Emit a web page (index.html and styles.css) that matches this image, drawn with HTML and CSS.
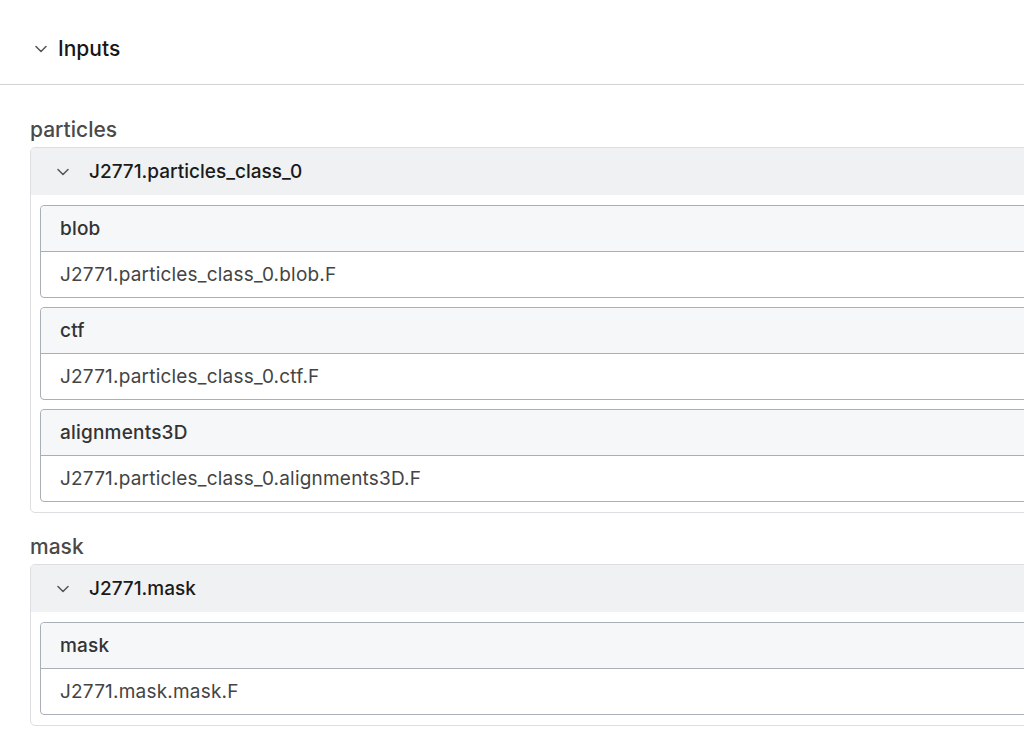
FILE: index.html
```html
<!DOCTYPE html>
<html lang="en">
<head>
    <meta charset="UTF-8">
    <meta name="viewport" content="width=device-width, initial-scale=1.0">
    <title>Inputs</title>
    <link rel="stylesheet" href="styles.css">
</head>
<body>
    <div class="section-header">
        <svg class="chevron" width="12" height="8" viewBox="0 0 12 8"><polyline points="1,1.5 6,6.5 11,1.5"/></svg>
        <span>Inputs</span>
    </div>
    <div class="content">
        <div class="input-group">
            <div class="group-label">particles</div>
            <div class="result-box">
                <div class="result-header">
                    <svg class="chevron" width="12" height="8" viewBox="0 0 12 8"><polyline points="1,1.5 6,6.5 11,1.5"/></svg>
                    <span>J2771.particles_class_0</span>
                </div>
                <div class="result-body">
                    <div class="slot">
                        <div class="slot-name">blob</div>
                        <div class="slot-value">J2771.particles_class_0.blob.F</div>
                    </div>
                    <div class="slot">
                        <div class="slot-name">ctf</div>
                        <div class="slot-value">J2771.particles_class_0.ctf.F</div>
                    </div>
                    <div class="slot">
                        <div class="slot-name">alignments3D</div>
                        <div class="slot-value">J2771.particles_class_0.alignments3D.F</div>
                    </div>
                </div>
            </div>
        </div>
        <div class="input-group">
            <div class="group-label">mask</div>
            <div class="result-box">
                <div class="result-header">
                    <svg class="chevron" width="12" height="8" viewBox="0 0 12 8"><polyline points="1,1.5 6,6.5 11,1.5"/></svg>
                    <span>J2771.mask</span>
                </div>
                <div class="result-body">
                    <div class="slot">
                        <div class="slot-name">mask</div>
                        <div class="slot-value">J2771.mask.mask.F</div>
                    </div>
                </div>
            </div>
        </div>
    </div>
</body>
</html>
```

FILE: styles.css
```css
body {
    font-family: Inter, "Noto Sans", sans-serif;
    margin: 0;
    overflow: hidden;
    background: #fff;
    color: #333;
}
.chevron {
    flex: none;
}
.chevron polyline {
    fill: none;
    stroke: #555;
    stroke-width: 1.5;
    stroke-linecap: round;
    stroke-linejoin: round;
}
.section-header {
    display: flex;
    align-items: center;
    gap: 11px;
    padding: 37px 0 23px 35px;
    line-height: 24px;
    font-size: 21px;
    font-weight: 500;
    color: #161616;
    border-bottom: 1px solid #d4d4d4;
}
.content {
    padding: 33px 0 0 30px;
    width: 1100px;
}
.input-group {
    margin-bottom: 22px;
}
.group-label {
    font-size: 21px;
    line-height: 24px;
    font-weight: 500;
    color: #4a4a4a;
    margin-bottom: 5px;
}
.result-box {
    border: 1px solid #dcdee1;
    border-radius: 5px;
    overflow: hidden;
}
.result-header {
    display: flex;
    align-items: center;
    gap: 20px;
    height: 47px;
    padding-left: 26px;
    background: #f0f1f3;
    font-size: 19px;
    font-weight: 500;
    color: #1a1a1a;
}
.result-body {
    display: flex;
    flex-direction: column;
    gap: 9px;
    padding: 10px 0 10px 9px;
}
.slot {
    border: 1px solid #a9afb7;
    border-radius: 4px;
}
.slot-name, .slot-value {
    height: 45px;
    line-height: 45px;
    padding-left: 19px;
    font-size: 19px;
    letter-spacing: 0.2px;
}
.slot-name {
    background: #f6f7f9;
    border-bottom: 1px solid #a9afb7;
    border-radius: 4px 4px 0 0;
    font-weight: 500;
    color: #333;
}
.slot-value {
    color: #444;
}
```
